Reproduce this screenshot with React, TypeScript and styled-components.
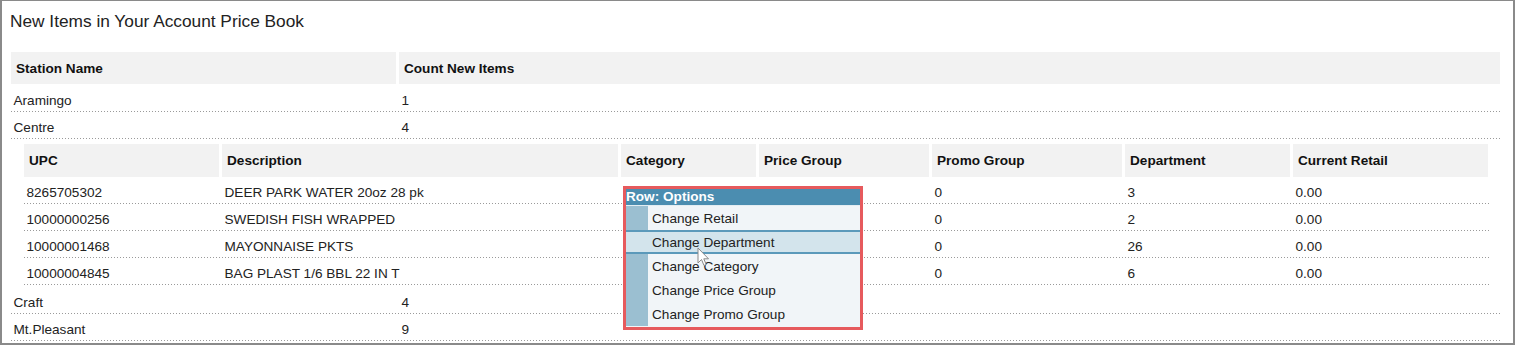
import styled, { createGlobalStyle } from "styled-components";

const GlobalStyle = createGlobalStyle`
  body {
    margin: 0;
    background: #fff;
    font-family: "Liberation Sans", Arial, sans-serif;
    color: #222;
  }
`

const Frame = styled.div`
  position: relative;
  box-sizing: border-box;
  width: 1515px;
  height: 345px;
  overflow: hidden;
  background: #fff;
  border: solid #8a8a8a;
  border-width: 1px 2px 2px 2px;
  padding: 10px 13px 0 9px;
`

const Title = styled.div`
  font-size: 17.3px;
  line-height: 20px;
  margin: 0 0 21px -1px;
  color: #222;
`

const dots = `
  background-image: linear-gradient(to right, #9a9a9a 1px, transparent 1px);
  background-size: 3px 1px;
  background-repeat: repeat-x;
  background-position: left bottom;
`

const HeadRow = styled.div<{ cols: string }>`
  display: grid;
  grid-template-columns: ${props => props.cols};
  column-gap: 3px;
  height: ${props => (props.cols.split(' ').length > 2 ? '33px' : '32px')};
`

const HeadCell = styled.div`
  display: flex;
  align-items: center;
  padding-left: 5px;
  background: #f2f2f2;
  font-size: 13.6px;
  font-weight: bold;
  color: #111;
`

const Row = styled.div<{ cols: string }>`
  display: grid;
  grid-template-columns: ${props => props.cols};
  column-gap: 3px;
  box-sizing: border-box;
  height: 27px;
  padding: 4px 0 1px;
  ${dots}
`

const Cell = styled.div`
  display: flex;
  align-items: center;
  padding-left: 2.5px;
  font-size: 13.6px;
  white-space: nowrap;
`

const Body = styled.div`
  margin-top: 1px;
`

const Nested = styled.div`
  width: 1466px;
  margin-left: 13px;
  padding: 5px 0 2px;
`

const Menu = styled.div`
  position: absolute;
  left: 621px;
  top: 185px;
  width: 240px;
  height: 144px;
  box-sizing: border-box;
  border: 3px solid #e65a5d;
  background: #f1f5f8;
  font-size: 13.6px;
`

const MenuTitle = styled.div`
  height: 16px;
  line-height: 16px;
  background: #4b8db0;
  border-bottom: 1px solid #e3edf2;
  color: #fff;
  font-weight: bold;
`

const MenuItem = styled.div<{ hover?: boolean }>`
  display: flex;
  box-sizing: border-box;
  height: 24px;
  background: ${props => (props.hover ? '#d3e4ec' : '#f1f5f8')};
  border-top: ${props => (props.hover ? '2px solid #5b99ba' : 'none')};
  border-bottom: ${props => (props.hover ? '2px solid #5b99ba' : 'none')};
`

const Strip = styled.div<{ hover?: boolean }>`
  width: 22px;
  flex: none;
  background: ${props => (props.hover ? '#d3e4ec' : '#9bbfd1')};
`

const Label = styled.div`
  display: flex;
  align-items: center;
  padding-left: 4px;
  color: #222;
`

const Cursor = styled.svg`
  position: absolute;
  left: 695px;
  top: 246px;
`

const outerCols = '385px 1101px';
const innerCols = '195px 396px 135px 170px 190px 165px 197px';

const items = [
  { upc: '8265705302', desc: 'DEER PARK WATER 20oz 28 pk', promo: '0', dept: '3', retail: '0.00' },
  { upc: '10000000256', desc: 'SWEDISH FISH WRAPPED', promo: '0', dept: '2', retail: '0.00' },
  { upc: '10000001468', desc: 'MAYONNAISE PKTS', promo: '0', dept: '26', retail: '0.00' },
  { upc: '10000004845', desc: 'BAG PLAST 1/6 BBL 22 IN T', promo: '0', dept: '6', retail: '0.00' },
]

const innerHeads = ['UPC', 'Description', 'Category', 'Price Group', 'Promo Group', 'Department', 'Current Retail'];

const menuItems = ['Change Retail', 'Change Department', 'Change Category', 'Change Price Group', 'Change Promo Group'];

const StationRow = ({ name, count }: { name: string, count: string }) => (
  <Row cols={outerCols}>
    <Cell>{name}</Cell>
    <Cell>{count}</Cell>
  </Row>
)

export default function App() {
  return (
    <>
      <GlobalStyle />
      <Frame>
        <Title>New Items in Your Account Price Book</Title>
        <HeadRow cols={outerCols}>
          <HeadCell>Station Name</HeadCell>
          <HeadCell>Count New Items</HeadCell>
        </HeadRow>
        <Body>
          <StationRow name="Aramingo" count="1" />
          <StationRow name="Centre" count="4" />
          <Nested>
            <HeadRow cols="195px 396px 135px 170px 190px 165px 195px">
              {innerHeads.map(h => <HeadCell key={h}>{h}</HeadCell>)}
            </HeadRow>
            {items.map(item => (
              <Row cols={innerCols} key={item.upc}>
                <Cell>{item.upc}</Cell>
                <Cell>{item.desc}</Cell>
                <Cell />
                <Cell />
                <Cell>{item.promo}</Cell>
                <Cell>{item.dept}</Cell>
                <Cell>{item.retail}</Cell>
              </Row>
            ))}
          </Nested>
          <StationRow name="Craft" count="4" />
          <StationRow name="Mt.Pleasant" count="9" />
        </Body>

        <Menu>
          <MenuTitle>Row: Options</MenuTitle>
          {menuItems.map((label, i) => (
            <MenuItem key={label} hover={i === 1}>
              <Strip hover={i === 1} />
              <Label>{label}</Label>
            </MenuItem>
          ))}
        </Menu>

        <Cursor width="13" height="20" viewBox="0 0 13 20">
          <path d="M1 1 L1 16 L4.5 12.5 L7 18.5 L9.2 17.5 L6.8 11.8 L11.5 11.8 Z"
            fill="#fff" stroke="#8a8a8a" strokeWidth="1" strokeLinejoin="round" />
        </Cursor>
      </Frame>
    </>
  );
}
